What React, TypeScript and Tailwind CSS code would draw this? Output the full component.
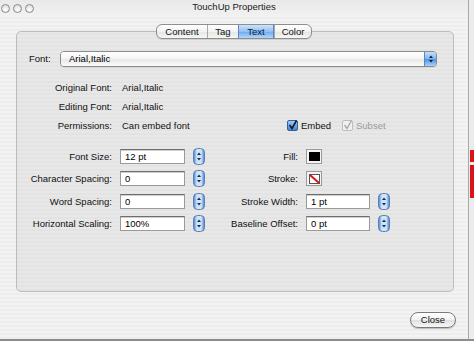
import React from "react";

const font = "font-['Liberation_Sans','Noto_Sans',sans-serif]";

function Stepper() {
  return (
    <svg width="12" height="17" viewBox="0 0 12 17" className="shrink-0">
      <defs>
        <linearGradient id="stp" x1="0" x2="1" y1="0" y2="0">
          <stop offset="0" stopColor="#3f7fd6" />
          <stop offset="0.3" stopColor="#cfe3f9" />
          <stop offset="0.7" stopColor="#cfe3f9" />
          <stop offset="1" stopColor="#3f7fd6" />
        </linearGradient>
      </defs>
      <rect x="0.5" y="0.5" width="11" height="16" rx="4" fill="url(#stp)" stroke="#5a7fae" />
      <path d="M4 7 L6 4.5 L8 7 Z" fill="#1d2c44" />
      <path d="M4 10 L6 12.5 L8 10 Z" fill="#1d2c44" />
    </svg>
  );
}

function Field({ value, w = "w-[65px]" }: { value: string; w?: string }) {
  return (
    <div
      className={`${w} h-[15px] shrink-0 bg-white border border-[#9a9a9a] border-t-[#6e6e6e] shadow-[inset_0_1px_0_#cfcfcf] flex items-center pl-[4px] text-[9.5px] text-[#000] leading-none`}
    >
      {value}
    </div>
  );
}

function Swatch({ stroke }: { stroke?: boolean }) {
  return (
    <div className="w-[16px] h-[15px] shrink-0 bg-[#f4f4f4] border border-[#9a9a9a] flex items-center justify-center">
      {stroke ? (
        <svg width="11" height="10" viewBox="0 0 11 10">
          <rect x="0.5" y="0.5" width="10" height="9" fill="#fff" stroke="#555" />
          <line x1="1" y1="1" x2="10" y2="9" stroke="#d11a1a" strokeWidth="2" />
        </svg>
      ) : (
        <div className="w-[11px] h-[9px] bg-black" />
      )}
    </div>
  );
}

function Check({ disabled }: { disabled?: boolean }) {
  return disabled ? (
    <svg width="11" height="11" viewBox="0 0 11 11" className="shrink-0">
      <rect x="0.5" y="0.5" width="10" height="10" rx="1.5" fill="#f1f1f1" stroke="#bdbdbd" />
      <path d="M2.5 5 L5 8.5 L9.5 0.5" fill="none" stroke="#a9a9a9" strokeWidth="1.4" />
    </svg>
  ) : (
    <svg width="11" height="11" viewBox="0 0 11 11" className="shrink-0">
      <defs>
        <linearGradient id="chk" x1="0" x2="0" y1="0" y2="1">
          <stop offset="0" stopColor="#a8cdf4" />
          <stop offset="1" stopColor="#3e82d8" />
        </linearGradient>
      </defs>
      <rect x="0.5" y="0.5" width="10" height="10" rx="1.5" fill="url(#chk)" stroke="#3b5f93" />
      <path d="M2.5 5 L5 8.5 L9.5 0.5" fill="none" stroke="#0d1a2e" strokeWidth="1.6" />
    </svg>
  );
}

function Tab({ label, w, selected, first, last }: { label: string; w: string; selected?: boolean; first?: boolean; last?: boolean }) {
  return (
    <div
      className={`${w} h-full flex items-center justify-center text-[9.5px] leading-none ${
        selected
          ? "bg-[linear-gradient(#cfe4fb,#8fc0f4_50%,#6aaaf0_51%,#b2d7fb)] text-[#0c1a33] border-x border-[#5d86b8]"
          : "bg-[linear-gradient(#ffffff,#f2f2f2_50%,#e4e4e4_51%,#f7f7f7)] text-[#111]"
      } ${first ? "rounded-l-[6px]" : ""} ${last ? "rounded-r-[6px]" : ""} ${!first && !selected ? "border-l border-[#a8a8a8]" : ""}`}
    >
      {label}
    </div>
  );
}

function Label({ children, w }: { children: React.ReactNode; w: string }) {
  return <div className={`${w} shrink-0 text-right text-[9.5px] text-[#111] leading-none`}>{children}</div>;
}

export default function App() {
  const stripe =
    "bg-[repeating-linear-gradient(0deg,#ededed_0px,#ededed_2px,#f3f3f3_2px,#f3f3f3_4px)]";
  return (
    <div className={`w-[474px] h-[341px] flex flex-col bg-[#e6e6e6] ${font}`}>
      <div className="flex flex-1 min-h-0">
        <div className={`w-[469px] h-full flex flex-col ${stripe} border-r border-[#a8a8a8]`}>
          {/* title bar */}
          <div className="h-[16px] relative flex items-center shrink-0 bg-[linear-gradient(#e9e9e9,#f1f1f1)]">
            <div className="flex gap-[3px] pl-[1px] pt-[1px]">
              <div className="w-[9px] h-[9px] rounded-full border border-[#8a8a8a] bg-[radial-gradient(circle_at_50%_70%,#ffffff,#d6d6d6)]" />
              <div className="w-[9px] h-[9px] rounded-full border border-[#8a8a8a] bg-[radial-gradient(circle_at_50%_70%,#ffffff,#d6d6d6)]" />
              <div className="w-[9px] h-[9px] rounded-full border border-[#8a8a8a] bg-[radial-gradient(circle_at_50%_70%,#ffffff,#d6d6d6)]" />
            </div>
            <div className="absolute inset-x-0 top-[1px] text-center text-[9.5px] font-medium text-[#1a1a1a] leading-[12px]">
              TouchUp Properties
            </div>
          </div>

          {/* tabs */}
          <div className="mt-[8px] flex justify-center relative z-10 shrink-0">
            <div className="h-[15px] flex border border-[#8e8e8e] rounded-[6px] shadow-[0_1px_0_#d0d0d0]">
              <Tab label="Content" w="w-[50px]" first />
              <Tab label="Tag" w="w-[31px]" />
              <Tab label="Text" w="w-[36px]" selected />
              <Tab label="Color" w="w-[37px]" last />
            </div>
          </div>

          {/* group box */}
          <div className="mx-[16px] mr-[14px] -mt-[8px] h-[261px] shrink-0 rounded-[5px] border border-[#bcbcbc] bg-[repeating-linear-gradient(0deg,#e3e3e3_0px,#e3e3e3_2px,#e8e8e8_2px,#e8e8e8_4px)] pt-[19px] flex flex-col">
            {/* font popup */}
            <div className="flex items-center pl-[12px] pr-[16px]">
              <div className="w-[31px] shrink-0 text-[9.5px] text-[#111] leading-none">Font:</div>
              <div className="flex-1 h-[16px] flex rounded-[4px] border border-[#8a8a8a] overflow-hidden shadow-[0_1px_0_#d6d6d6]">
                <div className="flex-1 bg-[linear-gradient(#ffffff,#f4f4f4_50%,#e8e8e8_51%,#fafafa)] flex items-center pl-[8px] text-[9.5px] text-[#000] leading-none">
                  Arial,Italic
                </div>
                <div className="w-[12px] bg-[linear-gradient(#c5defa,#7fb4ef_50%,#4b91e6_51%,#a9d1fb)] border-l border-[#5d86b8] flex items-center justify-center">
                  <svg width="6" height="10" viewBox="0 0 6 10">
                    <path d="M1 4 L3 1.5 L5 4 Z" fill="#0f1d33" />
                    <path d="M1 6 L3 8.5 L5 6 Z" fill="#0f1d33" />
                  </svg>
                </div>
              </div>
            </div>

            {/* info rows */}
            <div className="mt-[12px] flex flex-col">
              <div className="h-[18px] flex items-center">
                <Label w="w-[95px]">Original Font:</Label>
                <div className="ml-[10px] text-[9.5px] text-[#111] leading-none">Arial,Italic</div>
              </div>
              <div className="h-[19px] flex items-center">
                <Label w="w-[95px]">Editing Font:</Label>
                <div className="ml-[10px] text-[9.5px] text-[#111] leading-none">Arial,Italic</div>
              </div>
              <div className="h-[19px] flex items-center">
                <Label w="w-[95px]">Permissions:</Label>
                <div className="ml-[10px] w-[165px] text-[9.5px] text-[#111] leading-none">Can embed font</div>
                <Check />
                <div className="ml-[3px] w-[41px] text-[9.5px] text-[#111] leading-none">Embed</div>
                <Check disabled />
                <div className="ml-[3px] text-[9.5px] text-[#9a9a9a] leading-none">Subset</div>
              </div>
            </div>

            {/* form rows */}
            <div className="mt-[14px] flex flex-col">
              <div className="h-[15px] flex items-center">
                <Label w="w-[95px]">Font Size:</Label>
                <div className="ml-[8px]"><Field value="12 pt" /></div>
                <div className="ml-[8px]"><Stepper /></div>
                <Label w="w-[93px]">Fill:</Label>
                <div className="ml-[8px]"><Swatch /></div>
              </div>
              <div className="mt-[7px] h-[15px] flex items-center">
                <Label w="w-[95px]">Character Spacing:</Label>
                <div className="ml-[8px]"><Field value="0" /></div>
                <div className="ml-[8px]"><Stepper /></div>
                <Label w="w-[93px]">Stroke:</Label>
                <div className="ml-[8px]"><Swatch stroke /></div>
              </div>
              <div className="mt-[8px] h-[15px] flex items-center">
                <Label w="w-[95px]">Word Spacing:</Label>
                <div className="ml-[8px]"><Field value="0" /></div>
                <div className="ml-[8px]"><Stepper /></div>
                <Label w="w-[93px]">Stroke Width:</Label>
                <div className="ml-[8px]"><Field value="1 pt" w="w-[64px]" /></div>
                <div className="ml-[8px]"><Stepper /></div>
              </div>
              <div className="mt-[7px] h-[15px] flex items-center">
                <Label w="w-[95px]">Horizontal Scaling:</Label>
                <div className="ml-[8px]"><Field value="100%" /></div>
                <div className="ml-[8px]"><Stepper /></div>
                <Label w="w-[93px]">Baseline Offset:</Label>
                <div className="ml-[8px]"><Field value="0 pt" w="w-[64px]" /></div>
                <div className="ml-[8px]"><Stepper /></div>
              </div>
            </div>
          </div>

          {/* close */}
          <div className="mt-[20px] flex justify-end pr-[12px]">
            <div className="w-[46px] h-[16px] rounded-full border border-[#7a7a7a] bg-[linear-gradient(#ffffff,#f1f1f1_50%,#e0e0e0_51%,#f7f7f7)] flex items-center justify-center text-[9.5px] font-medium text-[#111] leading-none shadow-[0_1px_1px_#bdbdbd]">
              Close
            </div>
          </div>
        </div>
        {/* right background strip */}
        <div className="flex-1 flex flex-col bg-[#ececec]">
          <div className="h-[150px]" />
          <div className="h-[12px] ml-[1px] bg-[#d8141a]" />
          <div className="h-[3px]" />
          <div className="h-[33px] ml-[1px] bg-[#d8141a]" />
        </div>
      </div>
      <div className="h-[2px] bg-[#8c8c8c] shrink-0" />
    </div>
  );
}
